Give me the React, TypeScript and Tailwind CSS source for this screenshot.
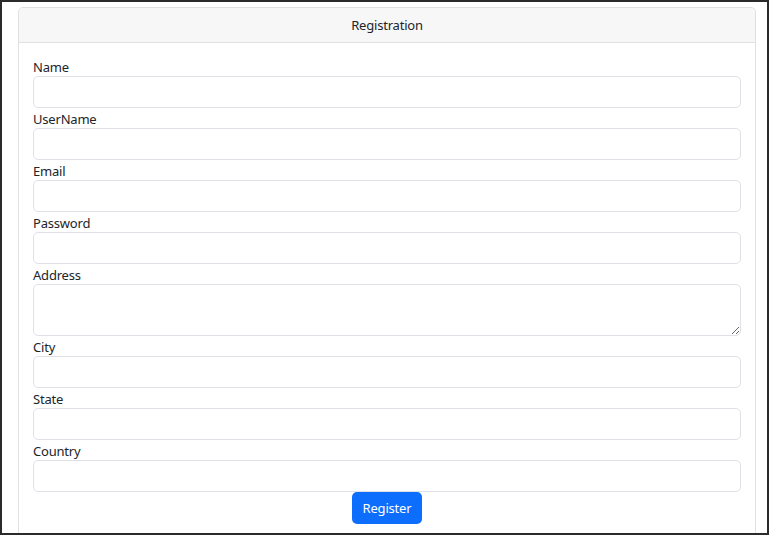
export default function App() {
  const fields = ["Name", "UserName", "Email", "Password", "Address", "City", "State", "Country"];

  return (
    <div
      className="h-[535px] w-[769px] overflow-hidden border-2 border-[#2b2b2b] bg-white text-[#212529]"
      style={{ fontFamily: '"Noto Sans", "Open Sans", sans-serif' }}
    >
      <div className="ml-4 mr-[11px] mt-[5px] rounded-[5px] border border-[#e1e1e1]">
        {/* header */}
        <div className="flex h-[35px] items-center justify-center rounded-t-[5px] border-b border-[#e1e1e1] bg-[#f7f7f8] pt-[2px] text-[13px] tracking-[-0.2px]">
          Registration
        </div>

        {/* form */}
        <form className="flex flex-col px-[14px] pb-6 pt-[13px]" onSubmit={(e) => e.preventDefault()}>
          {fields.map((f) => (
            <div key={f} className="flex flex-col">
              <label className="h-5 pt-[2px] text-[13px] leading-[18px] tracking-[-0.2px]">{f}</label>
              {f === "Address" ? (
                <textarea className="h-[52px] w-full rounded-[5px] border border-[#dee2e6] px-2 text-[13px] outline-none" />
              ) : (
                <input
                  type={f === "Password" ? "password" : "text"}
                  className="h-8 w-full rounded-[5px] border border-[#dee2e6] px-2 text-[13px] outline-none"
                />
              )}
            </div>
          ))}
          <div className="flex justify-center">
            <button
              type="submit"
              className="h-8 w-[70px] rounded-[5px] bg-[#0d6efd] pt-px text-[13px] tracking-[-0.2px] text-white"
            >
              Register
            </button>
          </div>
        </form>
      </div>
    </div>
  );
}
